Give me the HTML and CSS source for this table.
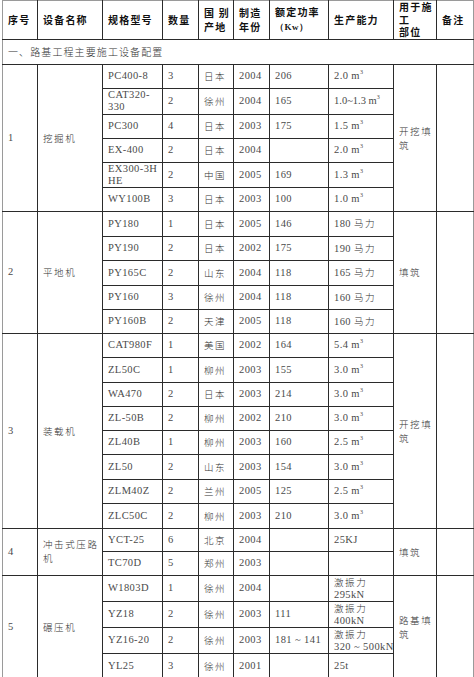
FILE: index.html
```html
<!DOCTYPE html>
<html lang="zh">
<head>
<meta charset="utf-8">
<link rel="stylesheet" href="styles.css">
</head>
<body>
<table class="sheet">
<colgroup>
<col class="c1"><col class="c2"><col class="c3"><col class="c4"><col class="c5">
<col class="c6"><col class="c7"><col class="c8"><col class="c9"><col class="c10">
</colgroup>
<tr class="head">
<th>序号</th><th>设备名称</th><th>规格型号</th><th>数量</th><th>国 别<br>产地</th>
<th>制造<br>年份</th><th>额定功率<br><span class="kw">（Kw）</span></th><th>生产能力</th><th class="tri">用于施<br>工<br>部位</th><th>备注</th>
</tr>
<tr class="sec"><td colspan="10">一、路基工程主要施工设备配置</td></tr>

<tr class="h24"><td rowspan="6">1</td><td rowspan="6" class="cn">挖掘机</td><td>PC400-8</td><td>3</td><td class="cn">日本</td><td>2004</td><td>206</td><td>2.0 m<sup>3</sup></td><td rowspan="6" class="cn use">开挖填<br>筑</td><td rowspan="6"></td></tr>
<tr class="h26"><td class="two">CAT320-<br>330</td><td>2</td><td class="cn">徐州</td><td>2004</td><td>165</td><td class="cap">1.0~1.3 m<sup>3</sup></td></tr>
<tr class="h24"><td>PC300</td><td>4</td><td class="cn">日本</td><td>2003</td><td>175</td><td>1.5 m<sup>3</sup></td></tr>
<tr class="h24"><td>EX-400</td><td>2</td><td class="cn">日本</td><td>2004</td><td></td><td>2.0 m<sup>3</sup></td></tr>
<tr class="h25"><td class="two">EX300-3H<br>HE</td><td>2</td><td class="cn">中国</td><td>2005</td><td>169</td><td>1.3 m<sup>3</sup></td></tr>
<tr class="h24"><td>WY100B</td><td>3</td><td class="cn">日本</td><td>2003</td><td>100</td><td>1.0 m<sup>3</sup></td></tr>

<tr class="h25"><td rowspan="5">2</td><td rowspan="5" class="cn">平地机</td><td>PY180</td><td>1</td><td class="cn">日本</td><td>2005</td><td>146</td><td>180 <span class="cn">马力</span></td><td rowspan="5" class="cn use">填筑</td><td rowspan="5"></td></tr>
<tr class="h24"><td>PY190</td><td>2</td><td class="cn">日本</td><td>2002</td><td>175</td><td>190 <span class="cn">马力</span></td></tr>
<tr class="h25"><td>PY165C</td><td>2</td><td class="cn">山东</td><td>2004</td><td>118</td><td>165 <span class="cn">马力</span></td></tr>
<tr class="h24"><td>PY160</td><td>3</td><td class="cn">徐州</td><td>2004</td><td>118</td><td>160 <span class="cn">马力</span></td></tr>
<tr class="h24"><td>PY160B</td><td>2</td><td class="cn">天津</td><td>2005</td><td>118</td><td>160 <span class="cn">马力</span></td></tr>

<tr class="h24"><td rowspan="8">3</td><td rowspan="8" class="cn">装载机</td><td>CAT980F</td><td>1</td><td class="cn">美国</td><td>2002</td><td>164</td><td>5.4 m<sup>3</sup></td><td rowspan="8" class="cn use">开挖填<br>筑</td><td rowspan="8"></td></tr>
<tr class="h25"><td>ZL50C</td><td>1</td><td class="cn">柳州</td><td>2003</td><td>155</td><td>3.0 m<sup>3</sup></td></tr>
<tr class="h24"><td>WA470</td><td>2</td><td class="cn">日本</td><td>2003</td><td>214</td><td>3.0 m<sup>3</sup></td></tr>
<tr class="h24"><td>ZL-50B</td><td>2</td><td class="cn">柳州</td><td>2002</td><td>210</td><td>3.0 m<sup>3</sup></td></tr>
<tr class="h24"><td>ZL40B</td><td>1</td><td class="cn">柳州</td><td>2003</td><td>160</td><td>2.5 m<sup>3</sup></td></tr>
<tr class="h25"><td>ZL50</td><td>2</td><td class="cn">山东</td><td>2003</td><td>154</td><td>3.0 m<sup>3</sup></td></tr>
<tr class="h24"><td>ZLM40Z</td><td>2</td><td class="cn">兰州</td><td>2005</td><td>125</td><td>2.5 m<sup>3</sup></td></tr>
<tr class="h25"><td>ZLC50C</td><td>2</td><td class="cn">柳州</td><td>2003</td><td>210</td><td>3.0 m<sup>3</sup></td></tr>

<tr class="h23"><td rowspan="2">4</td><td rowspan="2" class="cn wide">冲击式压路<br>机</td><td>YCT-25</td><td>6</td><td class="cn">北京</td><td>2004</td><td></td><td>25KJ</td><td rowspan="2" class="cn use">填筑</td><td rowspan="2"></td></tr>
<tr class="h24"><td>TC70D</td><td>5</td><td class="cn">郑州</td><td>2003</td><td></td><td></td></tr>

<tr class="h26"><td rowspan="4">5</td><td rowspan="4" class="cn">碾压机</td><td>W1803D</td><td>1</td><td class="cn">徐州</td><td>2004</td><td></td><td class="two"><span class="cn">激振力</span><br>295kN</td><td rowspan="4" class="cn use">路基填<br>筑</td><td rowspan="4"></td></tr>
<tr class="h26"><td>YZ18</td><td>2</td><td class="cn">徐州</td><td>2003</td><td>111</td><td class="two"><span class="cn">激振力</span><br>400kN</td></tr>
<tr class="h25"><td>YZ16-20</td><td>2</td><td class="cn">徐州</td><td>2003</td><td>181 ~ 141</td><td class="two"><span class="cn">激振力</span><br>320 ~ 500kN</td></tr>
<tr class="h25"><td>YL25</td><td>3</td><td class="cn">徐州</td><td>2001</td><td></td><td>25t</td></tr>
</table>
</body>
</html>
```

FILE: styles.css
```css
html, body {
  margin: 0;
  padding: 0;
  background: #ffffff;
}

.sheet {
  margin-left: 2px;
  border-collapse: collapse;
  table-layout: fixed;
  width: 471px;
  font-family: "Liberation Serif", "Noto Sans CJK SC", serif;
  font-size: 10.5px;
  color: #4a4a4a;
  letter-spacing: 0.4px;
}

.c1 { width: 35px; }
.c2 { width: 65px; }
.c3 { width: 60px; }
.c4 { width: 36px; }
.c5 { width: 35px; }
.c6 { width: 36px; }
.c7 { width: 59px; }
.c8 { width: 65px; }
.c9 { width: 43px; }
.c10 { width: 37px; }

.sheet td, .sheet th {
  border: 1px solid #2b2b2b;
  padding: 0 0 0 5px;
  text-align: left;
  vertical-align: middle;
  line-height: 12px;
  white-space: nowrap;
  overflow: hidden;
}

.sheet tr > :first-child { border-left-color: #9a9a9a; }
.sheet tr > td:last-child, .sheet tr > th:last-child { border-right-color: #9a9a9a; }
.head th { border-top-color: #9a9a9a; }

.head {
  height: 38px;
}

.head th {
  font-family: "Noto Sans CJK SC", sans-serif;
  font-weight: 700;
  font-size: 10px;
  letter-spacing: 1.2px;
  color: #111;
  line-height: 14px;
}

.head th.tri { line-height: 12.5px; }

.kw {
  font-family: "Liberation Serif", serif;
  font-weight: 700;
  font-size: 9px;
  letter-spacing: 0.5px;
}

.sec { height: 25px; }
.sec td {
  font-family: "Noto Sans CJK SC", sans-serif;
  font-weight: 300;
  font-size: 10px;
  letter-spacing: 1.1px;
  color: #333;
}

.cn {
  font-family: "Noto Sans CJK SC", sans-serif;
  font-weight: 300;
  font-size: 9.5px;
  letter-spacing: 1.6px;
  color: #333;
}

.cn.wide { line-height: 13.5px; }
.cn.use { line-height: 14px; }

.cap { letter-spacing: 0; }

.two { line-height: 11.5px; }

sup {
  font-size: 6px;
  line-height: 0;
  vertical-align: 5px;
}

.h23 { height: 23px; }
.h24 { height: 24px; }
.h25 { height: 25px; }
.h26 { height: 26px; }
```
